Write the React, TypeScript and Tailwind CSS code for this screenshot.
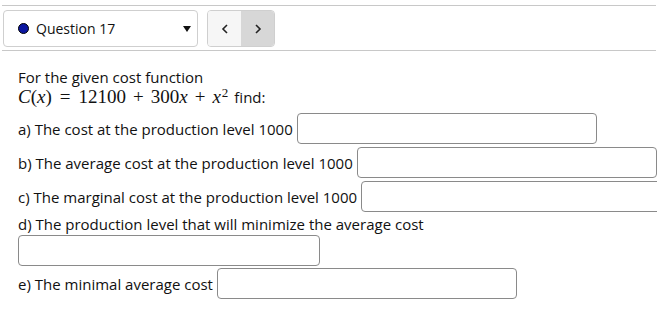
export default function App() {
  return (
    <div className="w-[657px] h-[313px] bg-white text-[#111] overflow-hidden" style={{ fontFamily: '"Open Sans", sans-serif' }}>
      {/* question nav */}
      <div className="mt-[5px] ml-[2px] w-[654px] border-t border-b border-[#c8c8c8] pt-[4px] pb-[3px] flex items-center">
        <div className="ml-[1px] w-[195px] h-[37px] border border-[#cfcfcf] rounded-[4px] flex items-center pl-[14px] pr-[6px]">
          <span className="w-[11px] h-[11px] rounded-full bg-[#0b16a0] border border-black" />
          <span className="ml-[7px] text-[14px]">Question 17</span>
          <svg className="ml-auto" width="8" height="6" viewBox="0 0 8 6">
            <path d="M0 0 H8 L4 6 Z" fill="#111" />
          </svg>
        </div>
        <div className="ml-[9px] flex h-[37px] border border-[#cfcfcf] rounded-[4px] overflow-hidden">
          <button className="w-[33px] h-full bg-[#f6f6f6] flex items-center justify-center">
            <svg width="8" height="10" viewBox="0 0 8 10" fill="none" stroke="#222" strokeWidth="1.6">
              <path d="M6 1 L2 5 L6 9" />
            </svg>
          </button>
          <button className="w-[33px] h-full bg-[#d7d7d7] flex items-center justify-center">
            <svg width="8" height="10" viewBox="0 0 8 10" fill="none" stroke="#222" strokeWidth="1.6">
              <path d="M2 1 L6 5 L2 9" />
            </svg>
          </button>
        </div>
      </div>

      {/* question body */}
      <div className="pl-[18px] pt-[16px] text-[15px] leading-[20px]">
        <div>For the given cost function</div>
        <div className="flex items-baseline">
          <span className="text-[19px]" style={{ fontFamily: '"Liberation Serif", serif' }}>
            <i>C</i>(<i>x</i>)<span className="mx-[8px]">=</span>12100<span className="mx-[7px]">+</span>300<i>x</i><span className="mx-[7px]">+</span><i>x</i>
            <sup className="text-[13px] ml-[1px]">2</sup>
          </span>
          <span className="ml-[6px]">find:</span>
        </div>

        <div className="mt-[6px] flex items-center h-[31px]">
          <span>a) The cost at the production level 1000</span>
          <input className="ml-[4px] w-[300px] h-[31px] border border-[#8a8a8a] rounded-[4px] shrink-0" />
        </div>
        <div className="mt-[3px] flex items-center h-[31px]">
          <span className="whitespace-nowrap">b) The average cost at the production level 1000</span>
          <input className="ml-[4px] w-[300px] h-[31px] border border-[#8a8a8a] rounded-[4px] shrink-0" />
        </div>
        <div className="mt-[3px] flex items-center h-[31px]">
          <span className="whitespace-nowrap">c) The marginal cost at the production level 1000</span>
          <input className="ml-[4px] w-[300px] h-[31px] border border-[#8a8a8a] rounded-[4px] shrink-0" />
        </div>
        <div className="mt-[2px]">d) The production level that will minimize the average cost</div>
        <input className="mt-[1px] block w-[302px] h-[31px] border border-[#8a8a8a] rounded-[4px]" />
        <div className="mt-[2px] flex items-center h-[31px]">
          <span>e) The minimal average cost</span>
          <input className="ml-[4px] w-[300px] h-[31px] border border-[#8a8a8a] rounded-[4px] shrink-0" />
        </div>
      </div>
    </div>
  );
}
